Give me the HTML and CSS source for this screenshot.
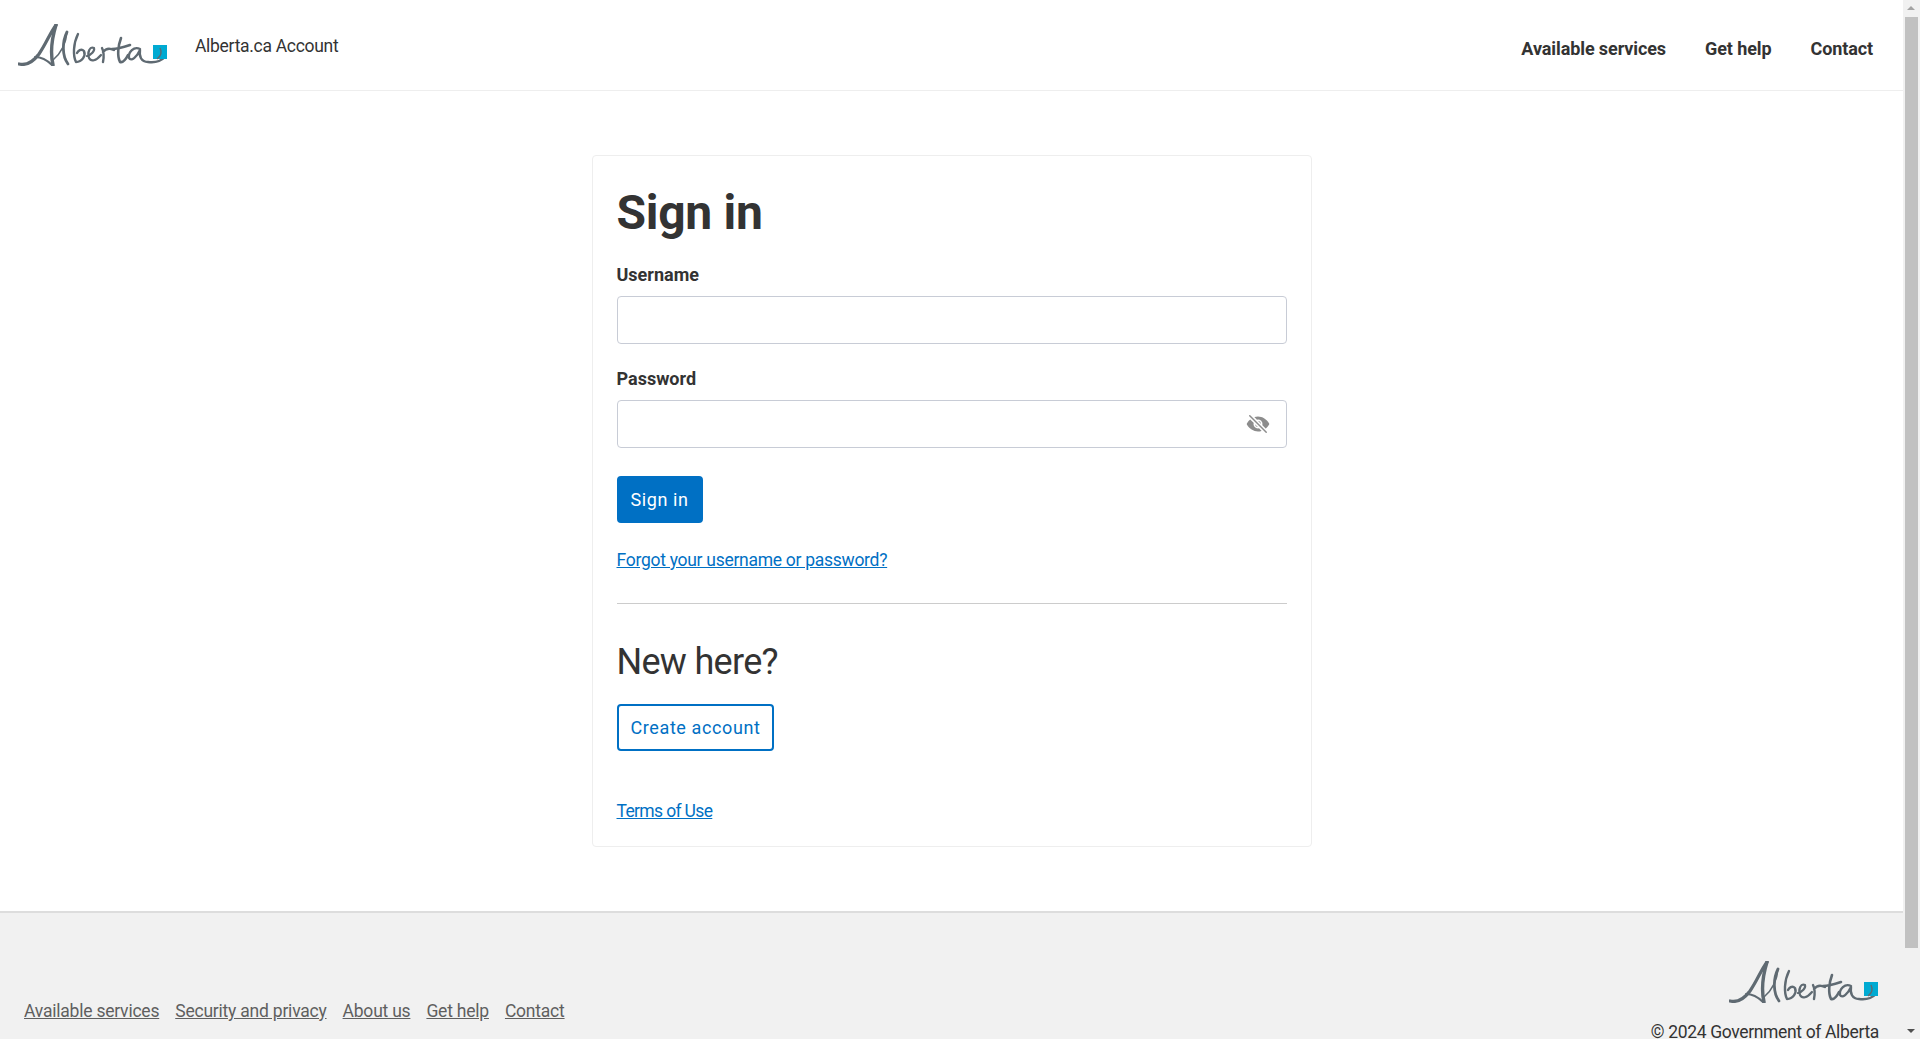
FILE: index.html
```html
<!DOCTYPE html>
<html lang="en">

<head>
    <meta charset="UTF-8">
    <meta name="viewport" content="width=device-width, initial-scale=1.0">
    <title>Sign in - Alberta.ca Account</title>
    <link rel="stylesheet" href="styles.css">
</head>

<body>

<svg class="defs" aria-hidden="true">
    <symbol id="albertaLogo" viewBox="0 0 150 42">
        <g fill="none" stroke="#5f6a72" stroke-linecap="round" stroke-linejoin="round">
            <path stroke-width="3.2" d="M1 40C9 42 15 38 21 30C28 20 32 9 38 1"/>
            <path stroke-width="3.4" d="M38 1C34 14 32 28 35 41"/>
            <path stroke-width="2" d="M17 33C24 33 30 37 34 41"/>
            <path stroke-width="1.6" d="M35 36C42 30 48 20 49 8"/>
            <path stroke-width="2.8" d="M49 8C44 18 44 32 50 40"/>
            <path stroke-width="2.4" d="M60 10C55 20 55 32 58 38C64 38 68 32 66 27C63 24 60 27 59 29"/>
            <path stroke-width="2.2" d="M69 32C73 31 77 27 76 24C72 22 69 28 71 34C73 38 78 37 83 31"/>
            <path stroke-width="2.4" d="M84 24C86 28 86 33 85 38M85 28C88 24 92 24 96 26"/>
            <path stroke-width="2.6" d="M103 14C100 22 99 32 102 38C105 39 108 35 110 31M94 25C100 25 106 23 112 21"/>
            <path stroke-width="2.4" d="M122 25C116 22 110 28 111 34C113 38 119 33 122 26C121 32 123 38 130 38C137 39 143 37 147 33"/>
        </g>
        <rect x="135" y="21" width="14" height="14" fill="#00aad2"/>
        <path fill="none" stroke="#5f6a72" stroke-width="1.4" d="M142 24C144 28 143 32 139 35"/>
    </symbol>
</svg>

<div class="window">
    <div class="viewport">
        <header class="siteHeader">
            <div class="brand">
                <svg class="logo" role="img" aria-label="Government of Alberta"><use href="#albertaLogo"/></svg>
                <span class="serviceName">Alberta.ca Account</span>
            </div>
            <nav class="mainNav">
                <a href="#">Available services</a>
                <a href="#">Get help</a>
                <a href="#">Contact</a>
            </nav>
        </header>

        <main class="card">
            <h1>Sign in</h1>
            <form>
                <div class="field">
                    <label for="username">Username</label>
                    <input type="text" id="username"/>
                </div>
                <div class="field">
                    <label for="password">Password</label>
                    <div class="passwordBox">
                        <input type="password" id="password"/>
                        <svg class="eyeIcon" viewBox="0 0 512 512" aria-hidden="true">
                            <path d="M432 448a15.92 15.92 0 01-11.31-4.69l-352-352a16 16 0 0122.62-22.62l352 352A16 16 0 01432 448zM248 315.85l-51.79-51.79a2 2 0 00-3.39 1.69 64.11 64.11 0 0053.49 53.49 2 2 0 001.69-3.39zM264 196.15L315.87 248a2 2 0 003.4-1.69 64.13 64.13 0 00-53.55-53.55 2 2 0 00-1.72 3.39z"/>
                            <path d="M491 273.36a32.2 32.2 0 00-.1-34.76c-26.46-40.92-60.79-75.68-99.27-100.53C349 110.55 302 96 255.68 96a226.54 226.54 0 00-71.82 11.79 4 4 0 00-1.56 6.63l47.24 47.24a4 4 0 003.82 1.05 96 96 0 01116 116 4 4 0 001.05 3.81l67.95 68a4 4 0 005.4.24 343.81 343.81 0 0067.24-77.4zM256 352a96 96 0 01-93.3-118.63 4 4 0 00-1.05-3.81l-66.84-66.87a4 4 0 00-5.41-.23c-24.39 20.81-47 46.13-67.67 75.72a31.92 31.92 0 00-.64 35.54c26.41 41.33 60.39 76.14 98.28 100.65C162.06 402 207.92 416 255.68 416a238.22 238.22 0 0072.64-11.55 4 4 0 001.61-6.64l-47.47-47.46a4 4 0 00-3.81-1.05A96 96 0 01256 352z"/>
                        </svg>
                    </div>
                </div>
                <button type="button" class="btn btnPrimary">Sign in</button>
            </form>
            <a class="cardLink forgot" href="#">Forgot your username or password?</a>
            <hr/>
            <h2>New here?</h2>
            <button type="button" class="btn btnOutline">Create account</button>
            <a class="cardLink terms" href="#">Terms of Use</a>
        </main>

        <footer class="siteFooter">
            <nav class="footerNav">
                <a href="#">Available services</a>
                <a href="#">Security and privacy</a>
                <a href="#">About us</a>
                <a href="#">Get help</a>
                <a href="#">Contact</a>
            </nav>
            <div class="footerBrand">
                <svg class="logo" role="img" aria-label="Government of Alberta"><use href="#albertaLogo"/></svg>
                <span class="copyright">© 2024 Government of Alberta</span>
            </div>
        </footer>
    </div>

    <div class="scrollbar" aria-hidden="true">
        <span class="arrowUp"></span>
        <span class="thumb"></span>
        <span class="arrowDown"></span>
    </div>
</div>

</body>

</html>
```

FILE: styles.css
```css
html, body {
    margin: 0;
    height: 100%;
    overflow: hidden;
}

body {
    font-family: Roboto, "Liberation Sans", Arial, sans-serif;
    font-size: 18px;
    line-height: 28px;
    color: #333;
    background: #fff;
}

a {
    color: #0070c4;
}

.defs {
    display: none;
}

.window {
    display: flex;
    height: 100vh;
}

.viewport {
    flex: 1;
    min-width: 0;
    overflow: hidden;
}

/* header */
.siteHeader {
    display: flex;
    justify-content: space-between;
    height: 90px;
    padding: 0 30px 0 18px;
    border-bottom: 1px solid #eee;
}

.brand {
    display: flex;
    align-items: flex-start;
    gap: 27px;
    padding-top: 24px;
}

.logo {
    width: 150px;
    height: 42px;
    flex: none;
}

.serviceName {
    font-size: 17.5px;
    letter-spacing: -0.3px;
    line-height: 22px;
    margin-top: 11px;
}

.mainNav {
    display: flex;
    gap: 39px;
    padding-top: 35px;
}

.mainNav a {
    color: #333;
    font-size: 18px;
    font-weight: 700;
    letter-spacing: -0.1px;
    text-decoration: none;
}

/* card */
.card {
    box-sizing: border-box;
    width: 720px;
    height: 692px;
    margin: 64px auto 64px;
    padding: 24px;
    border: 1px solid #eee;
    border-radius: 4px;
}

h1 {
    margin: 5px 0 20px;
    font-size: 48px;
    line-height: 56px;
    font-weight: 700;
    letter-spacing: -0.3px;
}

h2 {
    margin: 36px 0 20px;
    font-size: 36px;
    line-height: 44px;
    font-weight: 400;
    letter-spacing: -0.7px;
}

.field {
    margin-bottom: 28px;
}

.field:first-child {
    margin-bottom: 21px;
}

.field label {
    display: block;
    margin-bottom: 7px;
    font-weight: 700;
    font-size: 18px;
}

.field input {
    display: block;
    box-sizing: border-box;
    width: 100%;
    height: 48px;
    border: 1px solid #c8ccd6;
    border-radius: 4px;
    background: #fff;
}

.passwordBox {
    position: relative;
}

.eyeIcon {
    position: absolute;
    top: 12px;
    right: 17px;
    width: 24px;
    height: 24px;
    fill: #8c8c8c;
}

.btn {
    display: block;
    box-sizing: border-box;
    height: 47px;
    padding: 0 12px;
    border-radius: 4px;
    font-family: inherit;
    font-size: 18px;
    letter-spacing: 0.6px;
    background: #fff;
    color: #0070c4;
    border: 2px solid #0070c4;
}

.btnPrimary {
    background: #0070c4;
    color: #fff;
}

.cardLink {
    display: block;
    width: fit-content;
    font-size: 17.5px;
    letter-spacing: -0.28px;
}

.forgot {
    margin-top: 23px;
}

.terms {
    margin-top: 46px;
    letter-spacing: -0.65px;
}

hr {
    margin: 29px 0 0;
    border: 0;
    border-top: 1px solid #ccc;
}

/* footer */
.siteFooter {
    display: flex;
    justify-content: space-between;
    align-items: flex-start;
    height: 200px;
    padding: 48px 24px 0 24px;
    border-top: 2px solid #ddd;
    background: #f1f1f1;
}

.footerNav {
    display: flex;
    gap: 16px;
    padding-top: 36px;
}

.footerNav a {
    color: #5f5f5f;
    font-size: 17.5px;
    letter-spacing: -0.22px;
}

.footerBrand {
    display: flex;
    flex-direction: column;
    align-items: flex-end;
    gap: 22px;
}

.copyright {
    font-size: 17.5px;
    letter-spacing: -0.35px;
    line-height: 14px;
}

/* scrollbar drawn by the browser in the original */
.scrollbar {
    display: flex;
    flex-direction: column;
    flex: none;
    width: 17px;
    background: #f1f1f1;
}

.thumb {
    height: 931px;
    margin: 0 2px;
    background: #c1c1c1;
}

.arrowUp, .arrowDown {
    display: block;
    height: 17px;
    box-sizing: border-box;
    position: relative;
}

.arrowUp::before, .arrowDown::before {
    content: "";
    position: absolute;
    left: 4px;
    border-left: 4px solid transparent;
    border-right: 4px solid transparent;
}

.arrowUp::before {
    top: 6px;
    border-bottom: 4px solid #a3a3a3;
}

.arrowDown {
    margin-top: auto;
}

.arrowDown::before {
    top: 7px;
    border-top: 4px solid #505050;
}
```
